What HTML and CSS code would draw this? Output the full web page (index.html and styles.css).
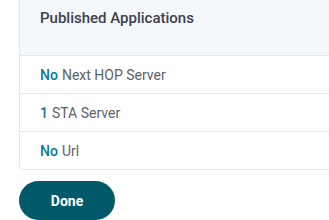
FILE: index.html
```html
<!DOCTYPE html>
<html>
<head>
<meta charset="utf-8">
<link rel="stylesheet" href="styles.css">
</head>
<body>
<div class="page">
  <div class="card">
    <div class="card-header">Published Applications</div>
    <div class="row"><span class="count">No</span> Next HOP Server</div>
    <div class="row"><span class="count">1</span> STA Server</div>
    <div class="row"><span class="count">No</span> Url</div>
  </div>
  <button class="done">Done</button>
</div>
</body>
</html>
```
FILE: styles.css
```css
html, body {
  margin: 0;
  padding: 0;
  background: #ffffff;
}
.page {
  padding-left: 19px;
  font-family: Roboto, "Liberation Sans", sans-serif;
  display: flex;
  flex-direction: column;
  align-items: flex-start;
}
.card {
  align-self: stretch;
  border: 1px solid #e3e6ea;
  border-top: none;
  border-right: none;
  border-radius: 0 0 0 4px;
  box-sizing: border-box;
}
.card-header {
  height: 56px;
  box-sizing: border-box;
  background: #f5f8fb;
  border-bottom: 1px solid #e3e6ea;
  padding: 9px 20px 0;
  font-size: 15px;
  line-height: 18px;
  font-weight: 500;
  color: #3c414b;
}
.row {
  height: 38px;
  box-sizing: border-box;
  padding: 0 20px;
  display: flex;
  align-items: center;
  gap: 4px;
  font-size: 14px;
  color: #5d636b;
  border-bottom: 1px solid #e3e6ea;
}
.row:last-child {
  border-bottom: none;
  height: 37px;
}
.count {
  color: #0b7a9a;
  font-weight: 500;
}
.done {
  margin-top: 11px;
  width: 96px;
  height: 39px;
  border: none;
  border-radius: 20px;
  background: #02596a;
  color: #ffffff;
  font-family: Roboto, "Liberation Sans", sans-serif;
  font-size: 14px;
  font-weight: 700;
  padding: 0;
}
```
